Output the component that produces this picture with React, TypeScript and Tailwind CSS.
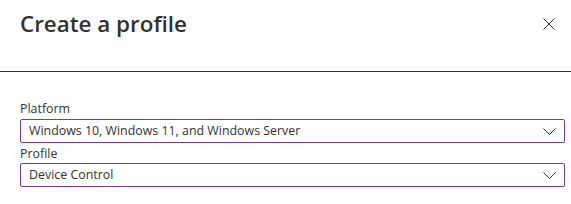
import React from "react";

function Chevron() {
  return (
    <svg width="13" height="7" viewBox="0 0 13 7" fill="none" className="shrink-0">
      <path d="M0.5 0.5 L6.5 6.5 L12.5 0.5" stroke="#323130" strokeWidth="1" />
    </svg>
  );
}

function Select({ value }: { value: string }) {
  return (
    <div className="flex h-[24px] items-center justify-between rounded-[2px] border border-[#7b3a96] pl-[8px] pr-[8px] text-[12.4px] text-[#323130]">
      <span>{value}</span>
      <Chevron />
    </div>
  );
}

export default function App() {
  return (
    <div className="h-[204px] w-[571px] bg-white" style={{ fontFamily: '"Open Sans", "Noto Sans", sans-serif' }}>
      <div className="flex h-[72px] items-start justify-between border-b border-[#323130] pl-[20px] pr-[16px]">
        <h1 className="mt-[8px] text-[22.4px] font-semibold leading-[32px] text-[#323130]">Create a profile</h1>
        <svg width="12" height="12" viewBox="0 0 12 12" className="mt-[18px]">
          <path d="M0.5 0.5 L11.5 11.5 M11.5 0.5 L0.5 11.5" stroke="#323130" strokeWidth="1" />
        </svg>
      </div>
      <div className="flex flex-col pl-[20px] pr-[6px] pt-[27px]">
        <label className="text-[12.4px] leading-[20px] text-[#323130]">Platform</label>
        <Select value="Windows 10, Windows 11, and Windows Server" />
        <label className="mt-[1px] text-[12.4px] leading-[19px] text-[#323130]">Profile</label>
        <Select value="Device Control" />
      </div>
    </div>
  );
}
